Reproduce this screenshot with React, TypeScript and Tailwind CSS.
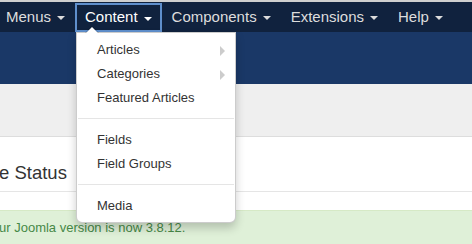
import React from "react";

function Caret({ active }: { active?: boolean }) {
  return (
    <span
      className={
        "ml-[6px] mt-[2px] inline-block h-0 w-0 border-x-[4px] border-t-[4px] border-x-transparent " +
        (active ? "border-t-white" : "border-t-[#dcdcdc]")
      }
    />
  );
}

function SubArrow() {
  return (
    <span className="absolute right-[10px] top-[8px] h-0 w-0 border-y-[5px] border-l-[5px] border-y-transparent border-l-[#cccccc]" />
  );
}

function Item({ label, sub }: { label: string; sub?: boolean }) {
  return (
    <div className="relative px-[20px] py-[3px] text-[13px] leading-[18px] text-[#333333] whitespace-nowrap">
      {label}
      {sub && <SubArrow />}
    </div>
  );
}

function Divider() {
  return <div className="mx-[1px] mt-[8px] mb-[9px] h-px bg-[#e5e5e5]" />;
}

function NavItem({ label }: { label: string }) {
  return (
    <div className="flex items-center px-[10px] text-[15px] text-[#dddddd] whitespace-nowrap">
      <span>{label}</span>
      <Caret />
    </div>
  );
}

export default function App() {
  return (
    <div className="relative h-[244px] w-[472px] overflow-hidden bg-white font-['Liberation_Sans',Arial,sans-serif]">
      <div className="h-[2px] bg-[#cfcfcf]" />
      <nav className="relative z-20 flex h-[30px] bg-[#10223e] ml-0">
        <div className="flex ml-[-4px]">
          <NavItem label="Menus" />
          <div className="relative mt-[1px] flex items-center px-[10px] text-[15px] text-white whitespace-nowrap shadow-[inset_0_0_0_2px_#5f8fcc]">
            <span className="mt-[-1px]">Content</span>
            <Caret active />
            <div className="absolute left-[1px] top-full w-[160px] rounded-b-[6px] border border-[rgba(0,0,0,0.2)] bg-white pt-[5px] pb-[4px] shadow-[0_5px_10px_rgba(0,0,0,0.2)]">
              <span className="absolute left-[8px] top-[-7px] h-0 w-0 border-x-[7px] border-b-[7px] border-x-transparent border-b-[rgba(0,0,0,0.2)]" />
              <span className="absolute left-[9px] top-[-6px] h-0 w-0 border-x-[6px] border-b-[6px] border-x-transparent border-b-white" />
              <Item label="Articles" sub />
              <Item label="Categories" sub />
              <Item label="Featured Articles" />
              <Divider />
              <Item label="Fields" />
              <Item label="Field Groups" />
              <Divider />
              <Item label="Media" />
            </div>
          </div>
          <NavItem label="Components" />
          <NavItem label="Extensions" />
          <NavItem label="Help" />
        </div>
      </nav>
      <header className="h-[52px] bg-[#1a3867]" />
      <div className="h-[53px] border-b border-[#dddddd] bg-[#efefef]" />
      <div className="pt-[18px]">
        <div className="h-[37px] border-b border-[#e5e5e5] text-[18.5px] leading-[36px] text-[#333333] whitespace-nowrap">
          <span className="ml-[-1px]">e Status</span>
        </div>
        <div className="mt-[18px] border-t border-[#d6e9c6] bg-[#dff0d8] py-[8px] text-[13px] leading-[18px] text-[#468847] whitespace-nowrap">
          <span className="ml-[-1px]">ur Joomla version is now 3.8.12.</span>
        </div>
      </div>
    </div>
  );
}
